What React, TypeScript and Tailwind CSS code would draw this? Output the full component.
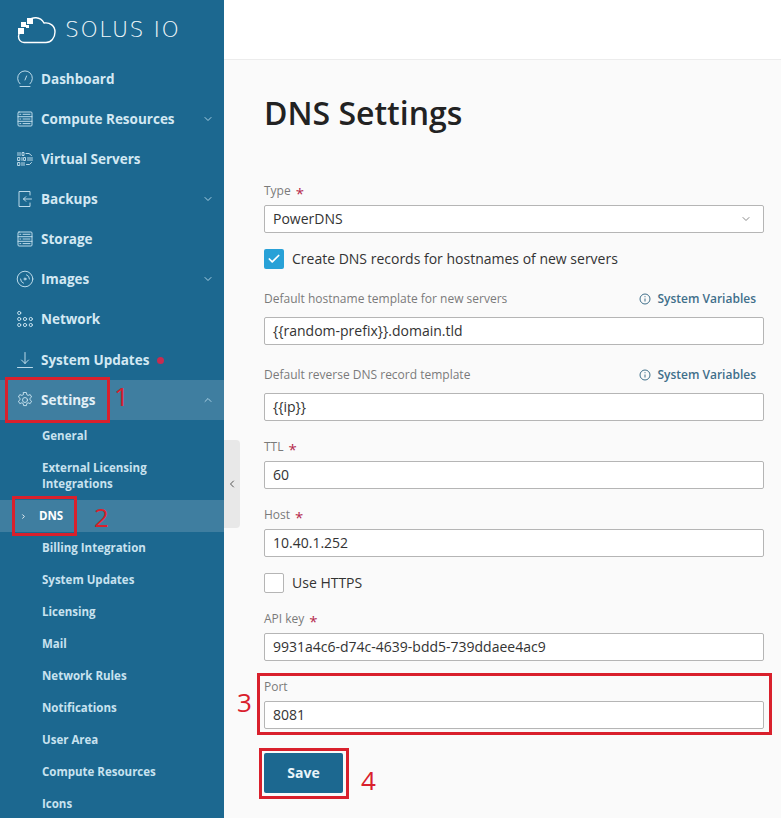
import type { ReactNode } from "react";
import { ChevronDown, ChevronLeft, ChevronRight, ChevronUp, Check } from "lucide-react";

const strokeProps = {
  fill: "none",
  stroke: "currentColor",
  strokeWidth: 0.9,
  strokeLinecap: "round" as const,
  strokeLinejoin: "round" as const,
};

function Icon({ children }: { children: ReactNode }) {
  return (
    <svg viewBox="0 0 18 18" className="h-[18px] w-[18px] shrink-0" {...strokeProps}>
      {children}
    </svg>
  );
}

const ServerIcon = (
  <Icon>
    <rect x="2" y="2" width="14" height="14" rx="1" />
    <path d="M2 6.7h14M2 11.3h14M3.800 4.300h1M3.800 9h1M3.800 13.600h1M7 4.300h7M7 9h7M7 13.600h7" />
  </Icon>
);

const icons: Record<string, ReactNode> = {
  dashboard: (
    <Icon>
      <path d="M4 13.800a7.400 7.400 0 1 1 10 0" />
      <path d="M9 10l1.600-4M4 16.500h10" />
    </Icon>
  ),
  compute: ServerIcon,
  virtual: (
    <Icon>
      <path d="M2 2.500v3M4 2.500v3M6.500 2.500h1.500v3H6.500zM10 3.500h3l2.500 2M2 7.500h1.800v3H2zM6 7.500v3M8 7.500h1.500v3H8zM11.500 8h5M11.500 10h5M2 12.500h1.800v3H2zM6 12.500v3M8 12.500v3M10.500 14.500h3l2-2" />
    </Icon>
  ),
  backups: (
    <Icon>
      <path d="M14 5V1.500H3v15h11V13" />
      <path d="M15.500 9H7.500M9.800 6.700L7.500 9l2.300 2.300" />
    </Icon>
  ),
  storage: ServerIcon,
  images: (
    <Icon>
      <circle cx="9" cy="9" r="7.800" />
      <circle cx="9" cy="9" r="1" />
      <path d="M4.500 9a4.500 4.500 0 0 0 3 4.200M13.500 9a4.500 4.500 0 0 0-3-4.200" />
    </Icon>
  ),
  network: (
    <Icon>
      <circle cx="3.200" cy="3" r="1.600" />
      <circle cx="3.200" cy="9" r="1.600" />
      <circle cx="3.200" cy="15" r="1.600" />
      <circle cx="9" cy="9" r="1.600" />
      <circle cx="9" cy="15" r="1.600" />
      <circle cx="14.800" cy="9" r="1.600" />
      <circle cx="14.800" cy="15" r="1.600" />
    </Icon>
  ),
  updates: (
    <Icon>
      <path d="M9 1.500v11M5.500 9L9 12.500 12.500 9M1.500 16.500h15" />
    </Icon>
  ),
  settings: (
    <Icon>
      <path d="M7.600 1.500h2.800l.4 2.200 1.300.7 2.100-.8 1.400 2.400-1.700 1.400v1.300l1.700 1.500-1.400 2.400-2.100-.8-1.300.7-.4 2.100H7.600l-.4-2.100-1.300-.7-2.100.8-1.400-2.400 1.700-1.500V7.400L2.400 6l1.400-2.400 2.100.8 1.300-.7z" />
      <circle cx="9" cy="9" r="2.500" />
    </Icon>
  ),
};

const mainNav = [
  { label: "Dashboard", icon: "dashboard" },
  { label: "Compute Resources", icon: "compute", expandable: true },
  { label: "Virtual Servers", icon: "virtual" },
  { label: "Backups", icon: "backups", expandable: true },
  { label: "Storage", icon: "storage" },
  { label: "Images", icon: "images", expandable: true },
  { label: "Network", icon: "network" },
];

const subNav = [
  "Billing Integration",
  "System Updates",
  "Licensing",
  "Mail",
  "Network Rules",
  "Notifications",
  "User Area",
  "Compute Resources",
  "Icons",
];

function NavItem({ label, icon, expandable }: { label: string; icon: string; expandable?: boolean }) {
  return (
    <div className="flex h-10 items-center pl-4 pr-[10px] text-[#cde6f3]">
      {icons[icon]}
      <span className="ml-[7px] flex-1 text-[13.5px] font-bold text-[#d3e8f3]">{label}</span>
      {expandable && <ChevronDown className="h-3 w-3 text-[#a9d0e4]" />}
    </div>
  );
}

function SubItem({ children }: { children: ReactNode }) {
  return (
    <div className="flex h-8 items-center pl-[42px] text-[11.5px] font-bold text-[#c8e2ef]">{children}</div>
  );
}

function Sidebar() {
  return (
    <aside className="h-[818px] w-[224px] shrink-0 overflow-hidden bg-[#1c6890]">
      <div className="flex h-[59px] items-center pl-[17px] text-white">
        <svg viewBox="0 0 40 28" className="h-[28px] w-[40px]" fill="none">
          <path
            d="M12 4.500C15 1 23 0 27 7c6-1 11 3 11 9 0 6-4 10.500-9 10.500H7c-3.500 0-5.500-3-5.500-6 0-1.500.4-2.500 1-3.500"
            stroke="currentColor"
            strokeWidth="1.400"
          />
          <path d="M10 2h6v6h-6zM4 6h5v5H4zM1 12h6v6H1zM9 9h3v3H9z" fill="currentColor" />
        </svg>
        <span className="ml-[8px] font-['DejaVu_Sans',sans-serif] text-[22px] font-extralight tracking-[1.5px] text-[#f2f8fb]">
          SOLUS IO
        </span>
      </div>
      {mainNav.map((item) => (
        <NavItem key={item.label} {...item} />
      ))}
      <div className="flex h-[41px] items-center pl-4 pt-[1px] text-[#cde6f3]">
        {icons.updates}
        <span className="ml-[7px] text-[13.5px] font-bold text-[#d3e8f3]">System Updates</span>
        <span className="ml-[8px] h-[7px] w-[7px] rounded-full bg-[#c72c50]" />
      </div>
      <div className="flex h-10 items-center bg-[#3f7ea0] pl-4 pr-[10px] text-[#cde6f3]">
        {icons.settings}
        <span className="ml-[7px] flex-1 text-[13.5px] font-bold text-[#e3f0f7]">Settings</span>
        <ChevronUp className="h-3 w-3 text-[#a9d0e4]" />
      </div>
      <SubItem>General</SubItem>
      <div className="flex h-[48px] items-center pl-[42px] text-[11.5px] font-bold leading-4 text-[#c8e2ef]">
        External Licensing
        <br />
        Integrations
      </div>
      <div className="flex h-8 items-center bg-[#3f7ea0] pl-[20px] text-[11.5px] font-bold text-white">
        <ChevronRight className="h-[7px] w-[7px]" strokeWidth={3} />
        <span className="ml-[12px]">DNS</span>
      </div>
      {subNav.map((label) => (
        <SubItem key={label}>{label}</SubItem>
      ))}
    </aside>
  );
}

function Label({ children, required }: { children: ReactNode; required?: boolean }) {
  return (
    <div className="flex h-[14px] items-center text-xs text-[#7a7a7a]">
      {children}
      {required && <span className="ml-[5px] mt-[5px] text-[15px] leading-none text-[#b5284c]">*</span>}
    </div>
  );
}

function TextBox({ value, withChevron }: { value: string; withChevron?: boolean }) {
  return (
    <div className="flex h-7 items-center justify-between rounded-[2px] border border-[#b5b5b5] bg-white pl-2 pr-[11px] text-sm text-[#333333]">
      <span>{value}</span>
      {withChevron && <ChevronDown className="h-3 w-3 text-[#8a8a8a]" />}
    </div>
  );
}

function SystemVariables() {
  return (
    <span className="flex items-center gap-[6px] pr-2 text-xs font-semibold text-[#3f6f8a]">
      <svg viewBox="0 0 12 12" className="h-3 w-3" fill="none" stroke="currentColor">
        <circle cx="6" cy="6" r="5" />
        <path d="M6 5.500v3M6 3.200v1" />
      </svg>
      System Variables
    </span>
  );
}

function CheckRow({ label, checked }: { label: string; checked?: boolean }) {
  return (
    <div className="flex h-5 items-center text-sm text-[#333333]">
      {checked ? (
        <span className="flex h-5 w-5 items-center justify-center rounded-[2px] bg-[#28a1d7] text-white">
          <Check className="h-[14px] w-[14px]" strokeWidth={3} />
        </span>
      ) : (
        <span className="h-5 w-5 rounded-[2px] border border-[#b5b5b5] bg-white" />
      )}
      <span className="ml-2">{label}</span>
    </div>
  );
}

function Form() {
  return (
    <main className="flex-1">
      <div className="h-[60px] border-b border-[#ececec] bg-white" />
      <div className="h-[758px] overflow-hidden bg-[#fafafa] pl-10 pr-[17px]">
        <h1 className="mt-[32px] h-[42px] text-[32px] font-semibold leading-[42px] text-[#222222]">DNS Settings</h1>
        <div className="mt-[50px]">
          <Label required>Type</Label>
        </div>
        <div className="mt-[7px]">
          <TextBox value="PowerDNS" withChevron />
        </div>
        <div className="mt-[16px]">
          <CheckRow label="Create DNS records for hostnames of new servers" checked />
        </div>
        <div className="mt-[22px] flex items-center justify-between">
          <Label>Default hostname template for new servers</Label>
          <SystemVariables />
        </div>
        <div className="mt-[10px]">
          <TextBox value="{{random-prefix}}.domain.tld" />
        </div>
        <div className="mt-[22px] flex items-center justify-between">
          <Label>Default reverse DNS record template</Label>
          <SystemVariables />
        </div>
        <div className="mt-[10px]">
          <TextBox value="{{ip}}" />
        </div>
        <div className="mt-[19px]">
          <Label required>TTL</Label>
        </div>
        <div className="mt-[7px]">
          <TextBox value="60" />
        </div>
        <div className="mt-[19px]">
          <Label required>Host</Label>
        </div>
        <div className="mt-[7px]">
          <TextBox value="10.40.1.252" />
        </div>
        <div className="mt-[16px]">
          <CheckRow label="Use HTTPS" />
        </div>
        <div className="mt-[19px]">
          <Label required>API key</Label>
        </div>
        <div className="mt-[7px]">
          <TextBox value="9931a4c6-d74c-4639-bdd5-739ddaee4ac9" />
        </div>
        <div className="mt-[19px]">
          <Label>Port</Label>
        </div>
        <div className="mt-[7px]">
          <TextBox value="8081" />
        </div>
        <button
          type="button"
          className="mt-[24px] h-10 w-[79px] rounded-[2px] bg-[#1c6890] text-sm font-bold text-[#e9f4f9]"
        >
          Save
        </button>
      </div>
    </main>
  );
}

// screenshot annotations drawn over the page
const marks = [
  "left-[5px] top-[377px] h-[46px] w-[105px]",
  "left-[12px] top-[496px] h-[40px] w-[65px]",
  "left-[257px] top-[673px] h-[62px] w-[515px]",
  "left-[259px] top-[748px] h-[51px] w-[90px]",
];

const numbers = [
  { text: "1", pos: "left-[114px] top-[378px]" },
  { text: "2", pos: "left-[94px] top-[499px]" },
  { text: "3", pos: "left-[237px] top-[684px]" },
  { text: "4", pos: "left-[361px] top-[762px]" },
];

export default function App() {
  return (
    <div className="relative flex h-[818px] w-[781px] overflow-hidden font-['Open_Sans',sans-serif]">
      <Sidebar />
      <Form />
      <div className="absolute left-[224px] top-[440px] flex h-[88px] w-4 items-center justify-center rounded-r bg-[#e8e8e8] text-[#555555]">
        <ChevronLeft className="h-3 w-3" />
      </div>
      {marks.map((m) => (
        <div key={m} className={`absolute border-[3px] border-[#d9202c] ${m}`} />
      ))}
      {numbers.map((n) => (
        <span key={n.text} className={`absolute text-[26px] leading-[36px] text-[#d9202c] ${n.pos}`}>
          {n.text}
        </span>
      ))}
    </div>
  );
}
